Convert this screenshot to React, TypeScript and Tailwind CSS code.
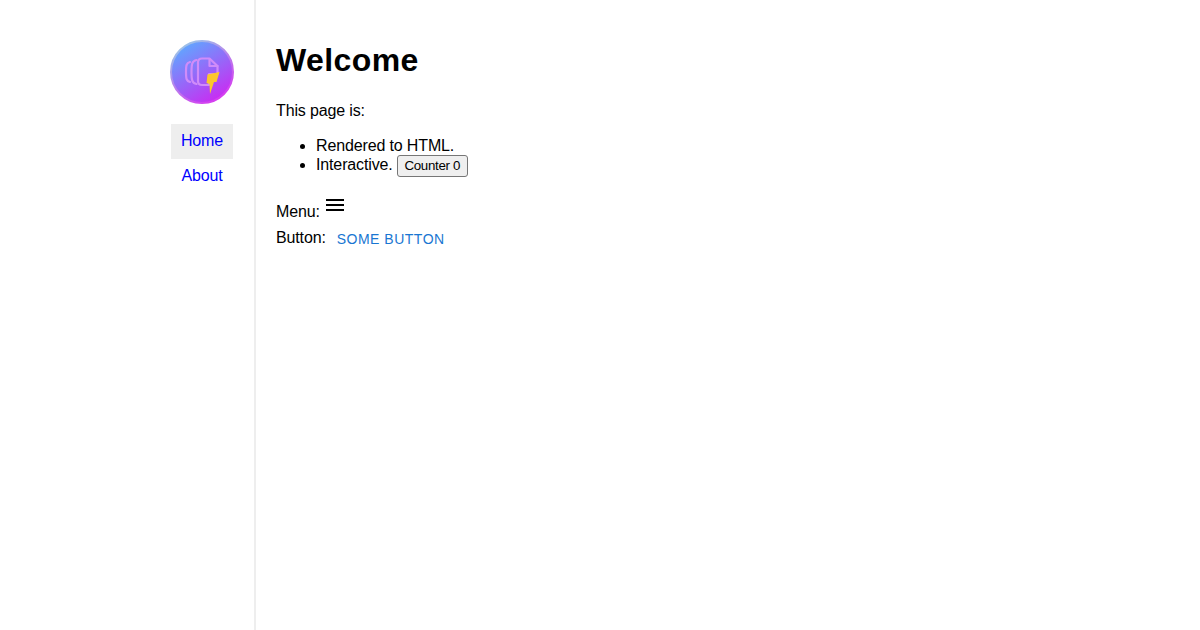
const FONT = "font-['Liberation_Sans',Arial,sans-serif] tracking-[-0.14px]";

function Logo() {
  return (
    <svg width="64" height="64" viewBox="0 0 64 64" className="block">
      <defs>
        <linearGradient id="logoFill" x1="0.2" y1="0.05" x2="0.75" y2="0.95">
          <stop offset="0" stopColor="#5fa8ff" />
          <stop offset="1" stopColor="#c92cf2" />
        </linearGradient>
        <linearGradient id="logoRing" x1="0.2" y1="0.05" x2="0.75" y2="0.95">
          <stop offset="0" stopColor="#9cc4e8" />
          <stop offset="1" stopColor="#d63cf0" />
        </linearGradient>
      </defs>
      <circle cx="32" cy="32" r="31" fill="url(#logoFill)" stroke="url(#logoRing)" strokeWidth="2" />
      <g fill="none" stroke="#d08cf9" strokeWidth="2.2" strokeLinejoin="round" strokeLinecap="round">
        <path d="M20 22 C16.500 23 16 25 16 32 C16 39 16.500 41 20 42" />
        <path d="M26.500 20 C22 21 21.500 24 21.500 32 C21.500 40 22 43 26.500 44" />
        <path d="M32 18.500 H39.500 L47.500 26 V34 H39 V45 H32 C29 45 28 44 28 41 V22.500 C28 19.500 29 18.500 32 18.500 Z" />
        <path d="M39.500 19 V26 H47.500" />
      </g>
      <path d="M37.500 34.500 L49.500 32 L46.500 42 L44 42 L40 54 L39.500 44 L36.500 43 Z" fill="#fcc72b" />
    </svg>
  );
}

function MenuIcon() {
  return (
    <span className="inline-block w-[18px] align-[6px] ml-[2px]">
      <span className="block h-[2px] bg-black" />
      <span className="block h-[2px] mt-[3px] bg-black" />
      <span className="block h-[2px] mt-[3px] bg-black" />
    </span>
  );
}

export default function App() {
  return (
    <div className={`${FONT} flex max-w-[900px] mx-auto text-base text-black bg-white`}>
      <nav className="flex flex-col items-center shrink-0 w-[106px] min-h-screen pt-[40px] px-[20px] border-r-2 border-[#eeeeee] leading-[28.8px]">
        <a href="#" className="block mb-[20px]">
          <Logo />
        </a>
        <a href="#" className="block px-[10px] py-[3px] bg-[#eeeeee] text-[#0000ff]">
          Home
        </a>
        <a href="#" className="block px-[10px] py-[3px] text-[#0000ff]">
          About
        </a>
      </nav>
      <main className="flex-1 px-[20px] pt-[40px]">
        <h1 className="text-[32px] font-bold leading-[40px] mb-[22px] tracking-[0.4px]">Welcome</h1>
        <p className="leading-[18px] mb-[17px]">This page is:</p>
        <ul className="list-disc pl-[40px] mb-[22px]">
          <li className="leading-[17px]">Rendered to HTML.</li>
          <li className="leading-[21px]">
            Interactive.{" "}
            <button className="text-[13.33px] leading-[15px] px-[6.5px] pt-[2px] pb-[3px] border border-[#767676] rounded-[3px] bg-[#efefef] text-black tracking-[-0.3px]">
              Counter 0
            </button>
          </li>
        </ul>
        <div className="leading-[26px]">
          Menu: <MenuIcon />
        </div>
        <div className="flex items-center h-[26px]">
          <span>Button:</span>
          <button className="ml-[3px] mt-[2px] px-[8px] py-[6px] text-[14px] leading-[14px] font-normal tracking-[0.5px] uppercase text-[#1976d2]">
            Some button
          </button>
        </div>
      </main>
    </div>
  );
}
